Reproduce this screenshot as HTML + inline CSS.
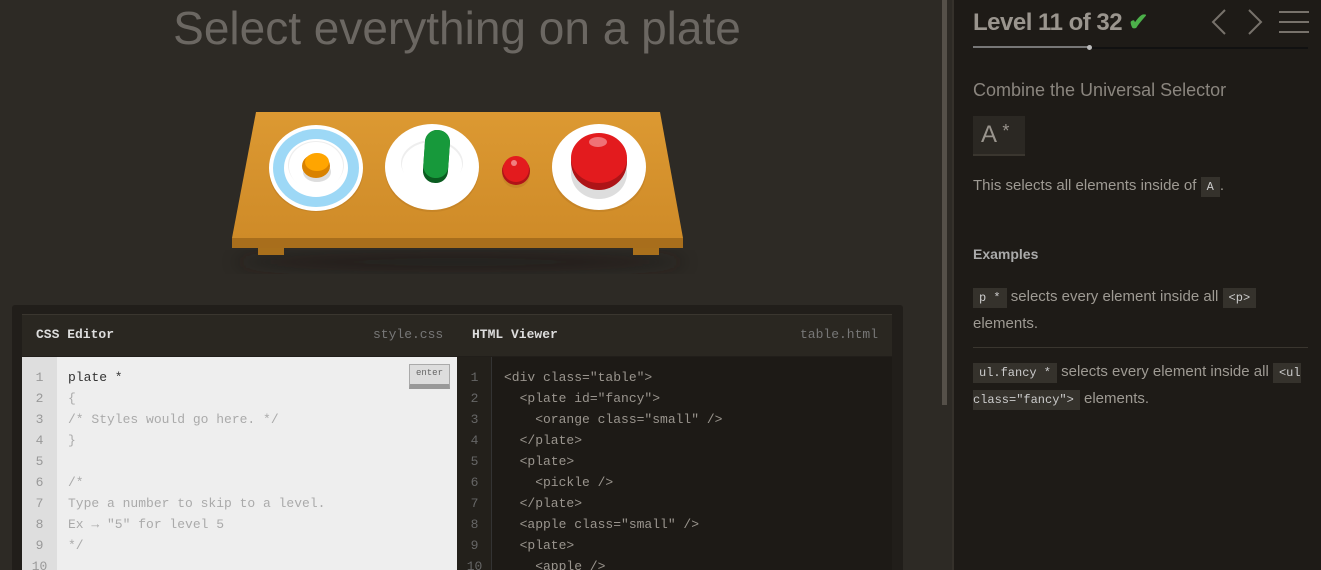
<!DOCTYPE html>
<html><head><style>
*{margin:0;padding:0;box-sizing:border-box}
html,body{width:1321px;height:570px;overflow:hidden}
body{background:#2d2a25;font-family:"Liberation Sans",sans-serif;position:relative}
.mono{font-family:"Liberation Mono","DejaVu Sans Mono",monospace}
h1{position:absolute;left:0;width:914px;top:1px;text-align:center;font-size:46px;font-weight:normal;color:#6b6762}
.right{position:absolute;left:952px;top:0;width:369px;height:570px;background:#1e1b17;border-left:2px solid #35312b}
.sb{position:absolute;left:942px;top:0;width:5px;height:405px;background:#555049}
.code{background:#35322c;color:#ccc;font-family:"Liberation Mono",monospace;font-size:12px;padding:3px 6px}
</style></head><body>
<h1>Select everything on a plate</h1>
<div class="sb"></div>
<svg style="position:absolute;left:220px;top:100px" width="480" height="180">
<defs><linearGradient id="t" x1="0" y1="0" x2="0" y2="1"><stop offset="0" stop-color="#dc9932"/><stop offset="1" stop-color="#cf8b28"/></linearGradient>
<filter id="b"><feGaussianBlur stdDeviation="8"/></filter></defs>
<ellipse cx="240" cy="162" rx="225" ry="10" fill="#1a1814" opacity=".5" filter="url(#b)"/>
<rect x="38" y="146" width="26" height="9" fill="#a9701c"/><rect x="413" y="146" width="26" height="9" fill="#a9701c"/>
<polygon points="36,12 440,12 463,138 12,138" fill="url(#t)"/>
<rect x="12" y="138" width="451" height="10" fill="#a86e1c"/>
<ellipse cx="96" cy="72" rx="47" ry="40" fill="#c07e24" opacity=".6"/>
<ellipse cx="96" cy="68" rx="47" ry="43" fill="#fff"/><ellipse cx="96" cy="68" rx="43" ry="39" fill="#9dd8f6"/><ellipse cx="96" cy="68" rx="32" ry="29" fill="#fff"/>
<ellipse cx="96" cy="65" rx="28" ry="24" fill="#eee"/><ellipse cx="96" cy="66" rx="27" ry="24" fill="#fff"/>
<ellipse cx="97" cy="72" rx="14" ry="10" fill="#ddd"/><ellipse cx="96" cy="66" rx="14" ry="12" fill="#d98200"/><ellipse cx="97" cy="62" rx="12" ry="9" fill="#ffa500"/>
<ellipse cx="212" cy="70" rx="47" ry="42" fill="#c07e24" opacity=".6"/><ellipse cx="212" cy="67" rx="47" ry="43" fill="#fff"/><ellipse cx="212" cy="63" rx="31" ry="23" fill="#eee"/><ellipse cx="212" cy="65" rx="30" ry="23" fill="#fff"/>
<rect x="204" y="30" width="25" height="53" rx="12" fill="#0a5c20" transform="rotate(4 216 56)"/><rect x="204" y="30" width="25" height="48" rx="12" fill="#17993b" transform="rotate(4 216 56)"/>
<circle cx="296" cy="74" r="14" fill="#c07e24" opacity=".6"/><circle cx="296" cy="71" r="14" fill="#b01318"/><circle cx="296" cy="69" r="13" fill="#e31b1e"/><circle cx="294" cy="63" r="3" fill="#f08080"/>
<ellipse cx="379" cy="72" rx="47" ry="40" fill="#c07e24" opacity=".6"/><ellipse cx="379" cy="67" rx="47" ry="43" fill="#fff"/>
<ellipse cx="379" cy="73" rx="28" ry="26" fill="#ddd"/><circle cx="379" cy="62" r="28" fill="#ad1417"/><ellipse cx="379" cy="58" rx="28" ry="25" fill="#e31b1e"/><ellipse cx="378" cy="42" rx="9" ry="5" fill="#ef7276"/>
</svg>
<div style="position:absolute;left:12px;top:305px;width:891px;height:270px;background:#211e1a;border-radius:3px"></div>
<div style="position:absolute;left:22px;top:314px;width:870px;height:42px;background:#2a2721;border-top:1px solid #3a362f"></div>
<div class="mono" style="position:absolute;left:36px;top:327px;font-size:13px;color:#ddd;font-weight:bold">CSS Editor</div>
<div class="mono" style="position:absolute;left:373px;top:327px;font-size:13px;color:#777">style.css</div>
<div class="mono" style="position:absolute;left:472px;top:327px;font-size:13px;color:#ddd;font-weight:bold">HTML Viewer</div>
<div class="mono" style="position:absolute;left:800px;top:327px;font-size:13px;color:#777">table.html</div>
<div style="position:absolute;left:22px;top:357px;width:435px;height:220px;background:#eeeeee"></div>
<div style="position:absolute;left:22px;top:357px;width:35px;height:220px;background:#dedede"></div>
<div style="position:absolute;left:409px;top:364px;width:41px;height:25px;background:#ddd;border:1px solid #aaa;border-bottom:5px solid #999;font-size:9px;color:#666;text-align:center;line-height:16px" class="mono">enter</div>
<div style="position:absolute;left:457px;top:357px;width:435px;height:220px;background:#1d1a16"></div>
<div style="position:absolute;left:457px;top:357px;width:35px;height:220px;background:#23201b;border-right:1px solid #333"></div>
<div class="mono" style="position:absolute;left:0;top:367px;font-size:13px;line-height:21px">
<div style="position:absolute;left:22px;width:35px;text-align:center;color:#999">1<br>2<br>3<br>4<br>5<br>6<br>7<br>8<br>9<br>10</div>
<div style="position:absolute;left:68px;width:380px;color:#aaa;white-space:pre"><span style="color:#333">plate *</span>
{
/* Styles would go here. */
}

/*
Type a number to skip to a level.
Ex → "5" for level 5
*/</div>
<div style="position:absolute;left:457px;width:35px;text-align:center;color:#666">1<br>2<br>3<br>4<br>5<br>6<br>7<br>8<br>9<br>10</div>
<div style="position:absolute;left:504px;width:380px;color:#9a958e;white-space:pre">&lt;div class="table"&gt;
  &lt;plate id="fancy"&gt;
    &lt;orange class="small" /&gt;
  &lt;/plate&gt;
  &lt;plate&gt;
    &lt;pickle /&gt;
  &lt;/plate&gt;
  &lt;apple class="small" /&gt;
  &lt;plate&gt;
    &lt;apple /&gt;</div>
</div>
<div class="right"></div>
<div style="position:absolute;left:973px;top:8px;font-size:24px;color:#9a958e;font-weight:bold;letter-spacing:-0.5px">Level 11 of 32 <span style="color:#4cb04a">✔</span></div>
<svg style="position:absolute;left:1205px;top:8px" width="112" height="30" fill="none" stroke="#77726b" stroke-width="2"><path d="M20 2 L8 14 L20 26"/><path d="M44 2 L56 14 L44 26"/><path d="M74 4H104M74 14H104M74 24H104"/></svg>
<div style="position:absolute;left:973px;top:46px;width:116px;height:2px;background:#777"></div>
<div style="position:absolute;left:1089px;top:47px;width:219px;height:2px;background:#111"></div>
<div style="position:absolute;left:1087px;top:45px;width:5px;height:5px;border-radius:50%;background:#bbb"></div>
<div style="position:absolute;left:973px;top:80px;font-size:18px;color:#8a857e">Combine the Universal Selector</div>
<div style="position:absolute;left:973px;top:116px;width:52px;height:40px;background:#2b2823;border-bottom:2px solid #3a362f;color:#99948d;font-size:24px;padding:5px 8px">A <span style="font-size:18px;vertical-align:top">*</span></div>
<div style="position:absolute;left:973px;top:177px;font-size:15px;color:#9e9a93">This selects all elements inside of <span class="code">A</span>.</div>
<div style="position:absolute;left:973px;top:246px;font-size:14px;color:#aaa;font-weight:bold">Examples</div>
<div style="position:absolute;left:973px;top:284px;width:335px;font-size:15px;line-height:26px;color:#9e9a93"><span class="code">p *</span> selects every element inside all <span class="code">&lt;p&gt;</span> elements.</div>
<div style="position:absolute;left:973px;top:347px;width:335px;height:1px;background:#3a362f"></div>
<div style="position:absolute;left:973px;top:359px;width:338px;font-size:15px;line-height:26px;color:#9e9a93"><span class="code">ul.fancy *</span> selects every element inside all <span class="code">&lt;ul class="fancy"&gt;</span> elements.</div>
</body></html>
